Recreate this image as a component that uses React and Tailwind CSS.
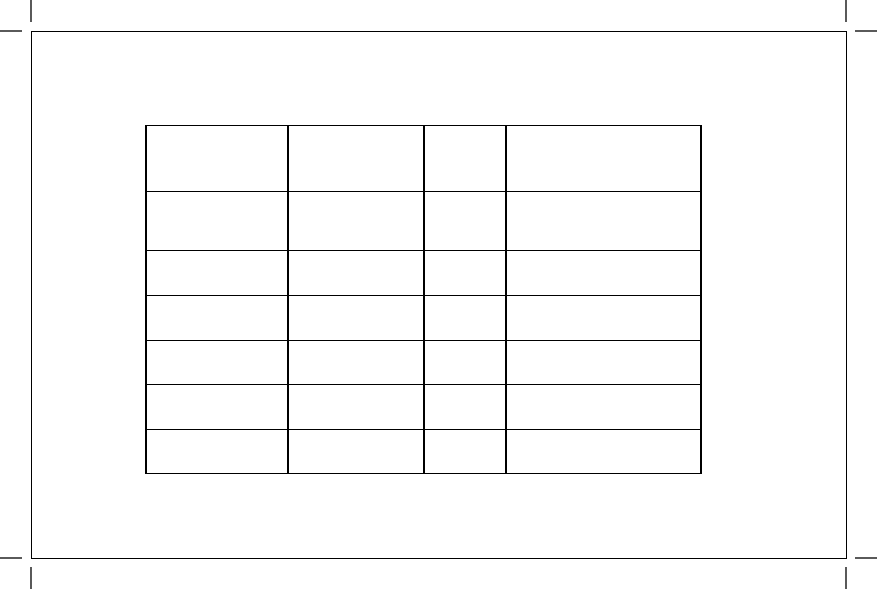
import React from 'react';

const cols = [142, 136, 82, 195];
const rows = [66, 59, 45, 45, 44, 45, 44];

// crop marks sit just outside the frame corners
const CropMarks = () => (
    <svg className="absolute inset-0 pointer-events-none" width="877" height="589" viewBox="0 0 877 589">
        <g stroke="#000" strokeWidth="1.3" fill="none">
            <line x1="31" y1="0" x2="31" y2="22" />
            <line x1="0" y1="31" x2="22" y2="31" />
            <line x1="846" y1="0" x2="846" y2="22" />
            <line x1="855" y1="31" x2="877" y2="31" />
            <line x1="31" y1="567" x2="31" y2="589" />
            <line x1="0" y1="558" x2="22" y2="558" />
            <line x1="846" y1="567" x2="846" y2="589" />
            <line x1="855" y1="558" x2="877" y2="558" />
        </g>
    </svg>
);

const App = () => {
    return (
        <div className="relative w-[877px] h-[589px] bg-white overflow-hidden">
            <CropMarks />
            <div className="absolute left-[31px] top-[31px] w-[816px] h-[528px] border border-black">
                <div className="pl-[113px] pt-[93px]">
                    <div
                        className="grid border-l-2 border-t border-black w-max"
                        style={{
                            gridTemplateColumns: cols.map(c => `${c}px`).join(' '),
                            gridTemplateRows: rows.map(r => `${r}px`).join(' '),
                        }}
                    >
                        {rows.map((_, r) =>
                            cols.map((_, c) => (
                                <div key={`${r}-${c}`} className="border-r-2 border-b border-black" />
                            ))
                        )}
                    </div>
                </div>
            </div>
        </div>
    );
};

export default App;
